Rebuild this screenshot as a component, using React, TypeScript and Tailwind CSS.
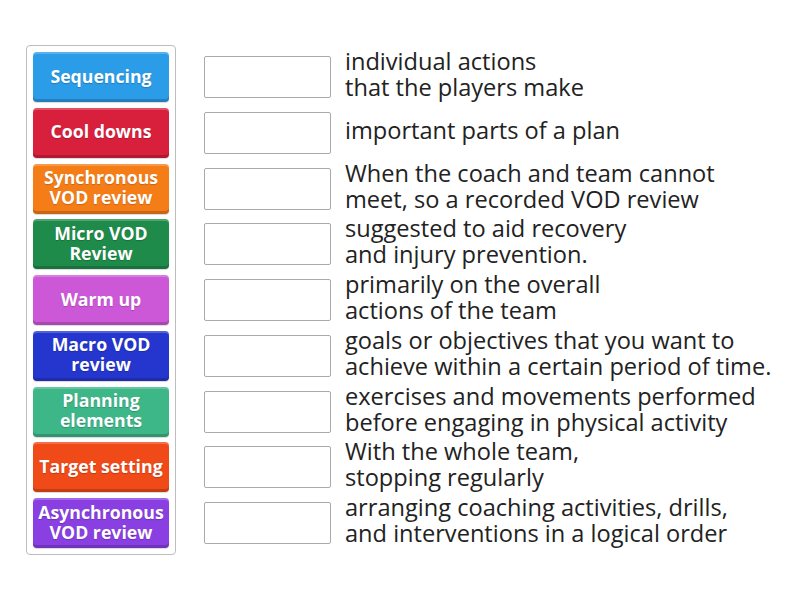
const font = "'Open Sans', 'Liberation Sans', sans-serif";

const tiles = [
  { label: "Sequencing", color: "bg-[#2b9ce8]" },
  { label: "Cool downs", color: "bg-[#d81f3c]" },
  { label: "Synchronous VOD review", color: "bg-[#f57d18]" },
  { label: "Micro VOD Review", color: "bg-[#1f8b4b]" },
  { label: "Warm up", color: "bg-[#cc58d8]" },
  { label: "Macro VOD review", color: "bg-[#2536cf]" },
  { label: "Planning elements", color: "bg-[#3db688]" },
  { label: "Target setting", color: "bg-[#f04a18]" },
  { label: "Asynchronous VOD review", color: "bg-[#8a3fe3]" },
];

const definitions = [
  ["individual actions", "that the players make"],
  ["important parts of a plan"],
  ["When the coach and team cannot", "meet, so a recorded VOD review"],
  ["suggested to aid recovery", "and injury prevention."],
  ["primarily on the overall", "actions of the team"],
  ["goals or objectives that you want to", "achieve within a certain period of time."],
  ["exercises and movements performed", "before engaging in physical activity"],
  ["With the whole team,", "stopping regularly"],
  ["arranging coaching activities, drills,", "and interventions in a logical order"],
];

function Tile({ label, color }: { label: string; color: string }) {
  return (
    <div
      className={`${color} flex h-[50px] items-center justify-center rounded-[4px] px-0.5 pb-[3px] text-center text-[17.7px] font-bold leading-[20px] text-white shadow-[inset_0_2px_0_rgba(255,255,255,0.22),inset_0_-3px_0_rgba(0,0,0,0.18),0_1px_1px_rgba(0,0,0,0.15)] [text-shadow:0_1px_1px_rgba(0,0,0,0.2)]`}
    >
      {label}
    </div>
  );
}

function AnswerRow({ lines }: { lines: string[] }) {
  return (
    <div className="flex h-[50px] items-center">
      <div className="h-[42px] w-[127px] shrink-0 rounded-[2px] border border-[#aaaaaa] bg-white" />
      <div className="mb-[6px] ml-[14px] whitespace-nowrap text-[23.6px] leading-[26px] text-[#222222]">
        {lines.map((line) => (
          <div key={line}>{line}</div>
        ))}
      </div>
    </div>
  );
}

export default function App() {
  return (
    <div className="h-[600px] w-[800px] bg-white" style={{ fontFamily: font }}>
      <div className="flex pl-[26px] pt-[45px]">
        <div className="flex w-[150px] flex-col gap-[5.75px] rounded-[4px] border border-[#bdbdbd] p-[6px]">
          {tiles.map((tile) => (
            <Tile key={tile.label} label={tile.label} color={tile.color} />
          ))}
        </div>
        <div className="ml-[28px] flex flex-col gap-[5.75px] pt-[7px]">
          {definitions.map((lines) => (
            <AnswerRow key={lines[0]} lines={lines} />
          ))}
        </div>
      </div>
    </div>
  );
}
